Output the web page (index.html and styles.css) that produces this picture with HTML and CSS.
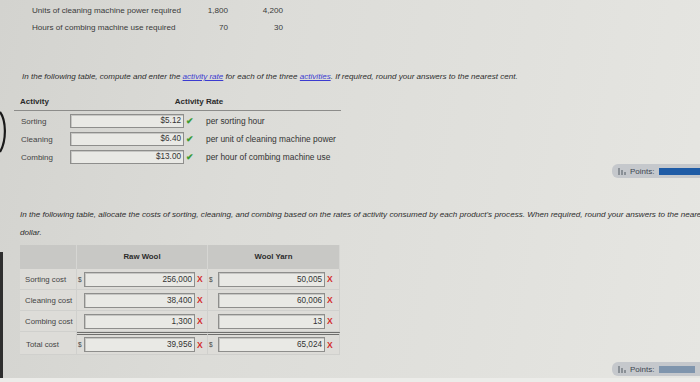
FILE: index.html
```html
<!DOCTYPE html>
<html>
<head>
<meta charset="utf-8">
<link rel="stylesheet" href="styles.css">
</head>
<body>
<div class="screen">
  <svg class="bezel-arc" width="8" height="44" viewBox="0 0 8 44"><path d="M0 2 C6 10 7 30 0 42" fill="none" stroke="#1a1a1a" stroke-width="2.2"/></svg>

  <div class="units">
    <div class="u-label">Units of cleaning machine power required</div>
    <div class="u-val u-a">1,800</div>
    <div class="u-val u-b">4,200</div>
    <div class="u-label">Hours of combing machine use required</div>
    <div class="u-val u-a">70</div>
    <div class="u-val u-b">30</div>
  </div>

  <p class="instr instr1">In the following table, compute and enter the <a class="link">activity rate</a> for each of the three <a class="link">activities</a>. If required, round your answers to the nearest cent.</p>

  <div class="rates">
    <div class="r-head r-act">Activity</div>
    <div class="r-head r-rate">Activity Rate</div>

    <div class="r-label">Sorting</div>
    <div class="r-input">$5.12</div>
    <div class="mark ok">✔</div>
    <div class="r-desc">per sorting hour</div>

    <div class="r-label">Cleaning</div>
    <div class="r-input">$6.40</div>
    <div class="mark ok">✔</div>
    <div class="r-desc">per unit of cleaning machine power</div>

    <div class="r-label">Combing</div>
    <div class="r-input">$13.00</div>
    <div class="mark ok">✔</div>
    <div class="r-desc">per hour of combing machine use</div>
  </div>

  <div class="points-row">
    <div class="points">
      <svg class="p-icon" width="8" height="7" viewBox="0 0 8 7"><rect x="0" y="0" width="2" height="7" fill="#8a9096"/><rect x="3" y="2" width="2" height="5" fill="#8a9096"/><rect x="6" y="4" width="2" height="3" fill="#8a9096"/></svg>
      <span class="p-text">Points:</span>
      <span class="p-bar"></span>
    </div>
  </div>

  <p class="instr instr2">In the following table, allocate the costs of sorting, cleaning, and combing based on the rates of activity consumed by each product's process. When required, round your answers to the nearest dollar.</p>

  <div class="alloc">
    <div class="a-row a-head">
      <div class="a-cell a-lab"></div>
      <div class="a-cell a-raw">Raw Wool</div>
      <div class="a-cell a-yarn">Wool Yarn</div>
    </div>
    <div class="a-row">
      <div class="a-cell a-lab">Sorting cost</div>
      <div class="a-cell a-raw"><span class="dol">$</span><span class="a-input">256,000</span><span class="mark bad">X</span></div>
      <div class="a-cell a-yarn"><span class="dol">$</span><span class="a-input">50,005</span><span class="mark bad">X</span></div>
    </div>
    <div class="a-row">
      <div class="a-cell a-lab">Cleaning cost</div>
      <div class="a-cell a-raw"><span class="dol"></span><span class="a-input">38,400</span><span class="mark bad">X</span></div>
      <div class="a-cell a-yarn"><span class="dol"></span><span class="a-input">60,006</span><span class="mark bad">X</span></div>
    </div>
    <div class="a-row">
      <div class="a-cell a-lab">Combing cost</div>
      <div class="a-cell a-raw"><span class="dol"></span><span class="a-input">1,300</span><span class="mark bad">X</span></div>
      <div class="a-cell a-yarn"><span class="dol"></span><span class="a-input">13</span><span class="mark bad">X</span></div>
    </div>
    <div class="a-row a-total">
      <div class="a-cell a-lab">Total cost</div>
      <div class="a-cell a-raw"><span class="dol">$</span><span class="a-input">39,956</span><span class="mark bad">X</span></div>
      <div class="a-cell a-yarn"><span class="dol">$</span><span class="a-input">65,024</span><span class="mark bad">X</span></div>
    </div>
  </div>

  <div class="points-row points-row2">
    <div class="points">
      <svg class="p-icon" width="8" height="7" viewBox="0 0 8 7"><rect x="0" y="0" width="2" height="7" fill="#8a9096"/><rect x="3" y="2" width="2" height="5" fill="#8a9096"/><rect x="6" y="4" width="2" height="3" fill="#8a9096"/></svg>
      <span class="p-text">Points:</span>
      <span class="p-bar p-bar2"></span>
    </div>
  </div>
</div>
</body>
</html>
```

FILE: styles.css
```css
* { box-sizing: border-box; }
html, body {
  margin: 0;
  padding: 0;
  width: 700px;
  height: 382px;
  overflow: hidden;
}
body {
  font-family: "Liberation Sans", Arial, sans-serif;
  color: #333;
  background: #d6d6d2;
}
.screen {
  position: relative;
  width: 700px;
  height: 382px;
  overflow: hidden;
  padding-top: 2px;
  background:
    linear-gradient(to right, #2e2e2e 3px, transparent 3px) 0 252px / 4px 130px no-repeat,
    linear-gradient(100deg, #d3d3cf 0%, #dcdcd8 35%, #e1e1dd 70%, #e6e6e2 100%);
  border-bottom: 4px solid #ecece9;
}
.bezel-arc {
  position: absolute;
  left: 0;
  top: 110px;
}

/* top units table */
.units {
  display: grid;
  grid-template-columns: 157px 39px 55px;
  grid-auto-rows: 17px;
  align-items: center;
  padding-left: 32px;
  font-size: 8.1px;
  color: #3a3a3a;
}
.u-val { text-align: right; }

/* instructions */
.instr {
  margin: 0;
  font-style: italic;
  color: #2e2e2e;
}
.instr1 {
  margin-top: 36px;
  padding-left: 22px;
  font-size: 8.05px;
  line-height: 10px;
  white-space: nowrap;
}
.link {
  color: #3b3bd0;
  text-decoration: underline;
}

/* activity rate table */
.rates {
  margin-top: 12px;
  margin-left: 14px;
  width: 327px;
  display: grid;
  grid-template-columns: 55px 115px 22px 135px;
  grid-auto-rows: 18px;
  align-items: center;
  font-size: 8px;
}
.r-head {
  font-weight: bold;
  color: #2a2a2a;
  height: 17px;
  line-height: 16px;
  border-bottom: 1px solid #8c8c8a;
  align-self: start;
}
.r-act { padding-left: 6px; }
.r-rate {
  grid-column: 2 / 5;
  text-align: center;
  padding-right: 12px;
}
.r-label {
  padding-left: 7px;
  color: #444;
}
.r-input {
  height: 14px;
  line-height: 12px;
  border: 1px solid #8e8e8c;
  background: #e9e9e5;
  box-shadow: inset 1px 1px 0 #c6c6c3;
  text-align: right;
  padding-right: 2px;
  font-size: 8.2px;
  color: #333;
  margin-left: 1px;
}
.r-desc {
  color: #333;
  white-space: nowrap;
  font-size: 8.4px;
}
.mark {
  font-weight: bold;
  font-size: 9px;
  line-height: 10px;
}
.ok {
  color: #3a9c34;
  padding-left: 2px;
}
.bad {
  color: #d42a2a;
  font-size: 8.5px;
  width: 9px;
  margin-left: 2px;
}

/* points badge */
.points-row {
  display: flex;
  justify-content: flex-end;
  margin-top: -2px;
}
.points {
  display: flex;
  align-items: center;
  gap: 4px;
  height: 14px;
  width: 100px;
  margin-right: -12px;
  padding-left: 6px;
  border-radius: 6px;
  background: #c5c8cc;
}
.p-text {
  font-size: 8px;
  color: #3d4650;
}
.p-bar {
  display: block;
  height: 7px;
  width: 46px;
  margin-left: 1px;
  background: #1f5ca6;
}
.p-bar2 {
  background: #7f95ad;
  width: 36px;
}
.points-row2 {
  margin-top: 7px;
}

.instr2 {
  margin-top: 28px;
  padding-left: 20px;
  width: 718px;
  font-size: 8.1px;
  line-height: 18px;
}

/* allocation table */
.alloc {
  margin-top: 3px;
  margin-left: 20px;
  width: 320px;
  font-size: 7.8px;
}
.a-row {
  display: flex;
  height: 21px;
  align-items: stretch;
  background: #dddcd8;
}
.a-head {
  height: 24px;
  background: #c8c8c5;
  font-weight: bold;
  color: #2c2c2c;
}
.a-cell {
  display: flex;
  align-items: center;
  border-right: 1px solid #d0d0cd;
  border-bottom: 1px solid #d0d0cd;
}
.a-head .a-cell {
  justify-content: center;
  border-right: 1px solid #d6d6d3;
  border-bottom: none;
  padding-bottom: 2px;
}
.a-lab {
  width: 57px;
  padding-left: 5px;
  color: #444;
}
.a-head .a-lab { justify-content: flex-start; }
.a-raw { width: 131px; }
.a-yarn { width: 132px; }
.dol {
  display: inline-block;
  width: 7px;
  font-size: 6.5px;
  text-align: left;
  padding-left: 1px;
  color: #444;
}
.a-yarn .dol {
  width: 10px;
}
.a-input {
  display: inline-block;
  height: 15px;
  line-height: 13px;
  border: 1px solid #8e8e8c;
  background: #e9e9e5;
  box-shadow: inset 1px 1px 0 #c6c6c3;
  text-align: right;
  padding-right: 2px;
  font-size: 8.2px;
  color: #333;
}
.a-raw .a-input { width: 111px; }
.a-yarn .a-input { width: 107px; }
.a-total {
  height: 23px;
}
.a-total .a-raw,
.a-total .a-yarn {
  border-top: 3px double #6e6e6c;
}
.a-total .a-lab { padding-left: 6px; padding-top: 3px; }
```
